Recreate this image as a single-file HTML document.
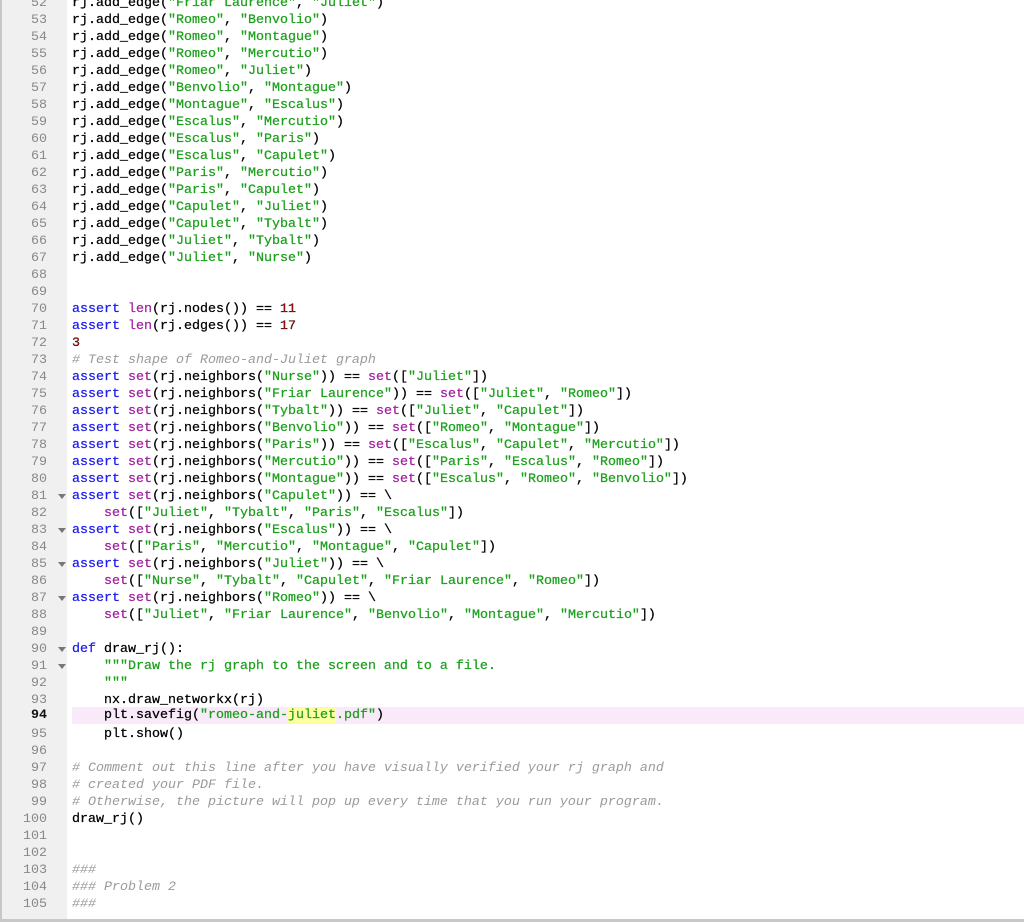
<!DOCTYPE html>
<html><head><style>
body{margin:0;width:1024px;height:922px;overflow:hidden;background:#fff;position:relative;font-family:"Liberation Mono",monospace;font-size:13.33px;}
#g{position:absolute;left:0;top:0;width:67px;height:919px;background:#f0f0f0;border-left:2px solid #c8c8c8;box-sizing:border-box;}
#bb{position:absolute;left:0;top:919px;width:1024px;height:3px;background:#c8c8c8;}
#w{position:absolute;left:0;top:2px;width:1024px;height:917px;overflow:visible;}
.l{position:absolute;left:0;width:1024px;height:17px;line-height:17px;white-space:pre;}
.num{position:absolute;left:0;width:47px;text-align:right;color:#888;}
.cur{color:#111;font-weight:bold;}
.f{position:absolute;left:58px;top:6px;width:0;height:0;border-left:4px solid transparent;border-right:4px solid transparent;border-top:5px solid #777;}
.code{position:absolute;left:72px;color:#000;-webkit-text-stroke:0.25px #000;}
.hl{background:#f8eaf8;}
.k{color:#1c1cf0;-webkit-text-stroke:0.25px #1c1cf0}.b{color:#a022a0;-webkit-text-stroke:0.25px #a022a0}.s{color:#1ca01c;-webkit-text-stroke:0.25px #1ca01c}.n{color:#a01010}.c{color:#9a9a9a;font-style:italic;-webkit-text-stroke:0}
.y{background:#ffffa0}
</style></head><body>
<div id="g"></div><div id="bb"></div>
<div id="w">
<div class="l" style="top:-7px"><span class="num">52</span><span class="code">rj.add_edge(<span class="s">"Friar Laurence"</span>, <span class="s">"Juliet"</span>)</span></div>
<div class="l" style="top:10px"><span class="num">53</span><span class="code">rj.add_edge(<span class="s">"Romeo"</span>, <span class="s">"Benvolio"</span>)</span></div>
<div class="l" style="top:27px"><span class="num">54</span><span class="code">rj.add_edge(<span class="s">"Romeo"</span>, <span class="s">"Montague"</span>)</span></div>
<div class="l" style="top:44px"><span class="num">55</span><span class="code">rj.add_edge(<span class="s">"Romeo"</span>, <span class="s">"Mercutio"</span>)</span></div>
<div class="l" style="top:61px"><span class="num">56</span><span class="code">rj.add_edge(<span class="s">"Romeo"</span>, <span class="s">"Juliet"</span>)</span></div>
<div class="l" style="top:78px"><span class="num">57</span><span class="code">rj.add_edge(<span class="s">"Benvolio"</span>, <span class="s">"Montague"</span>)</span></div>
<div class="l" style="top:95px"><span class="num">58</span><span class="code">rj.add_edge(<span class="s">"Montague"</span>, <span class="s">"Escalus"</span>)</span></div>
<div class="l" style="top:112px"><span class="num">59</span><span class="code">rj.add_edge(<span class="s">"Escalus"</span>, <span class="s">"Mercutio"</span>)</span></div>
<div class="l" style="top:129px"><span class="num">60</span><span class="code">rj.add_edge(<span class="s">"Escalus"</span>, <span class="s">"Paris"</span>)</span></div>
<div class="l" style="top:146px"><span class="num">61</span><span class="code">rj.add_edge(<span class="s">"Escalus"</span>, <span class="s">"Capulet"</span>)</span></div>
<div class="l" style="top:163px"><span class="num">62</span><span class="code">rj.add_edge(<span class="s">"Paris"</span>, <span class="s">"Mercutio"</span>)</span></div>
<div class="l" style="top:180px"><span class="num">63</span><span class="code">rj.add_edge(<span class="s">"Paris"</span>, <span class="s">"Capulet"</span>)</span></div>
<div class="l" style="top:197px"><span class="num">64</span><span class="code">rj.add_edge(<span class="s">"Capulet"</span>, <span class="s">"Juliet"</span>)</span></div>
<div class="l" style="top:214px"><span class="num">65</span><span class="code">rj.add_edge(<span class="s">"Capulet"</span>, <span class="s">"Tybalt"</span>)</span></div>
<div class="l" style="top:231px"><span class="num">66</span><span class="code">rj.add_edge(<span class="s">"Juliet"</span>, <span class="s">"Tybalt"</span>)</span></div>
<div class="l" style="top:248px"><span class="num">67</span><span class="code">rj.add_edge(<span class="s">"Juliet"</span>, <span class="s">"Nurse"</span>)</span></div>
<div class="l" style="top:265px"><span class="num">68</span></div>
<div class="l" style="top:282px"><span class="num">69</span></div>
<div class="l" style="top:299px"><span class="num">70</span><span class="code"><span class="k">assert</span> <span class="b">len</span>(rj.nodes()) == <span class="n">11</span></span></div>
<div class="l" style="top:316px"><span class="num">71</span><span class="code"><span class="k">assert</span> <span class="b">len</span>(rj.edges()) == <span class="n">17</span></span></div>
<div class="l" style="top:333px"><span class="num">72</span><span class="code"><span class="n">3</span></span></div>
<div class="l" style="top:350px"><span class="num">73</span><span class="code"><span class="c"># Test shape of Romeo-and-Juliet graph</span></span></div>
<div class="l" style="top:367px"><span class="num">74</span><span class="code"><span class="k">assert</span> <span class="b">set</span>(rj.neighbors(<span class="s">"Nurse"</span>)) == <span class="b">set</span>([<span class="s">"Juliet"</span>])</span></div>
<div class="l" style="top:384px"><span class="num">75</span><span class="code"><span class="k">assert</span> <span class="b">set</span>(rj.neighbors(<span class="s">"Friar Laurence"</span>)) == <span class="b">set</span>([<span class="s">"Juliet"</span>, <span class="s">"Romeo"</span>])</span></div>
<div class="l" style="top:401px"><span class="num">76</span><span class="code"><span class="k">assert</span> <span class="b">set</span>(rj.neighbors(<span class="s">"Tybalt"</span>)) == <span class="b">set</span>([<span class="s">"Juliet"</span>, <span class="s">"Capulet"</span>])</span></div>
<div class="l" style="top:418px"><span class="num">77</span><span class="code"><span class="k">assert</span> <span class="b">set</span>(rj.neighbors(<span class="s">"Benvolio"</span>)) == <span class="b">set</span>([<span class="s">"Romeo"</span>, <span class="s">"Montague"</span>])</span></div>
<div class="l" style="top:435px"><span class="num">78</span><span class="code"><span class="k">assert</span> <span class="b">set</span>(rj.neighbors(<span class="s">"Paris"</span>)) == <span class="b">set</span>([<span class="s">"Escalus"</span>, <span class="s">"Capulet"</span>, <span class="s">"Mercutio"</span>])</span></div>
<div class="l" style="top:452px"><span class="num">79</span><span class="code"><span class="k">assert</span> <span class="b">set</span>(rj.neighbors(<span class="s">"Mercutio"</span>)) == <span class="b">set</span>([<span class="s">"Paris"</span>, <span class="s">"Escalus"</span>, <span class="s">"Romeo"</span>])</span></div>
<div class="l" style="top:469px"><span class="num">80</span><span class="code"><span class="k">assert</span> <span class="b">set</span>(rj.neighbors(<span class="s">"Montague"</span>)) == <span class="b">set</span>([<span class="s">"Escalus"</span>, <span class="s">"Romeo"</span>, <span class="s">"Benvolio"</span>])</span></div>
<div class="l" style="top:486px"><span class="num">81</span><span class="f"></span><span class="code"><span class="k">assert</span> <span class="b">set</span>(rj.neighbors(<span class="s">"Capulet"</span>)) == \</span></div>
<div class="l" style="top:503px"><span class="num">82</span><span class="code">    <span class="b">set</span>([<span class="s">"Juliet"</span>, <span class="s">"Tybalt"</span>, <span class="s">"Paris"</span>, <span class="s">"Escalus"</span>])</span></div>
<div class="l" style="top:520px"><span class="num">83</span><span class="f"></span><span class="code"><span class="k">assert</span> <span class="b">set</span>(rj.neighbors(<span class="s">"Escalus"</span>)) == \</span></div>
<div class="l" style="top:537px"><span class="num">84</span><span class="code">    <span class="b">set</span>([<span class="s">"Paris"</span>, <span class="s">"Mercutio"</span>, <span class="s">"Montague"</span>, <span class="s">"Capulet"</span>])</span></div>
<div class="l" style="top:554px"><span class="num">85</span><span class="f"></span><span class="code"><span class="k">assert</span> <span class="b">set</span>(rj.neighbors(<span class="s">"Juliet"</span>)) == \</span></div>
<div class="l" style="top:571px"><span class="num">86</span><span class="code">    <span class="b">set</span>([<span class="s">"Nurse"</span>, <span class="s">"Tybalt"</span>, <span class="s">"Capulet"</span>, <span class="s">"Friar Laurence"</span>, <span class="s">"Romeo"</span>])</span></div>
<div class="l" style="top:588px"><span class="num">87</span><span class="f"></span><span class="code"><span class="k">assert</span> <span class="b">set</span>(rj.neighbors(<span class="s">"Romeo"</span>)) == \</span></div>
<div class="l" style="top:605px"><span class="num">88</span><span class="code">    <span class="b">set</span>([<span class="s">"Juliet"</span>, <span class="s">"Friar Laurence"</span>, <span class="s">"Benvolio"</span>, <span class="s">"Montague"</span>, <span class="s">"Mercutio"</span>])</span></div>
<div class="l" style="top:622px"><span class="num">89</span></div>
<div class="l" style="top:639px"><span class="num">90</span><span class="f"></span><span class="code"><span class="k">def</span> draw_rj():</span></div>
<div class="l" style="top:656px"><span class="num">91</span><span class="f"></span><span class="code">    <span class="s">"""Draw the rj graph to the screen and to a file.</span></span></div>
<div class="l" style="top:673px"><span class="num">92</span><span class="code">    <span class="s">"""</span></span></div>
<div class="l" style="top:690px"><span class="num">93</span><span class="code">    nx.draw_networkx(rj)</span></div>
<div class="l" style="top:705px"><span class="num cur">94</span><span class="code hl" style="width:952px">    plt.savefig(<span class="s">"romeo-and-<span class="y">juliet</span>.pdf"</span>)</span></div>
<div class="l" style="top:724px"><span class="num">95</span><span class="code">    plt.show()</span></div>
<div class="l" style="top:741px"><span class="num">96</span></div>
<div class="l" style="top:758px"><span class="num">97</span><span class="code"><span class="c"># Comment out this line after you have visually verified your rj graph and</span></span></div>
<div class="l" style="top:775px"><span class="num">98</span><span class="code"><span class="c"># created your PDF file.</span></span></div>
<div class="l" style="top:792px"><span class="num">99</span><span class="code"><span class="c"># Otherwise, the picture will pop up every time that you run your program.</span></span></div>
<div class="l" style="top:809px"><span class="num">100</span><span class="code">draw_rj()</span></div>
<div class="l" style="top:826px"><span class="num">101</span></div>
<div class="l" style="top:843px"><span class="num">102</span></div>
<div class="l" style="top:860px"><span class="num">103</span><span class="code"><span class="c">###</span></span></div>
<div class="l" style="top:877px"><span class="num">104</span><span class="code"><span class="c">### Problem 2</span></span></div>
<div class="l" style="top:894px"><span class="num">105</span><span class="code"><span class="c">###</span></span></div>
</div>
</body></html>
